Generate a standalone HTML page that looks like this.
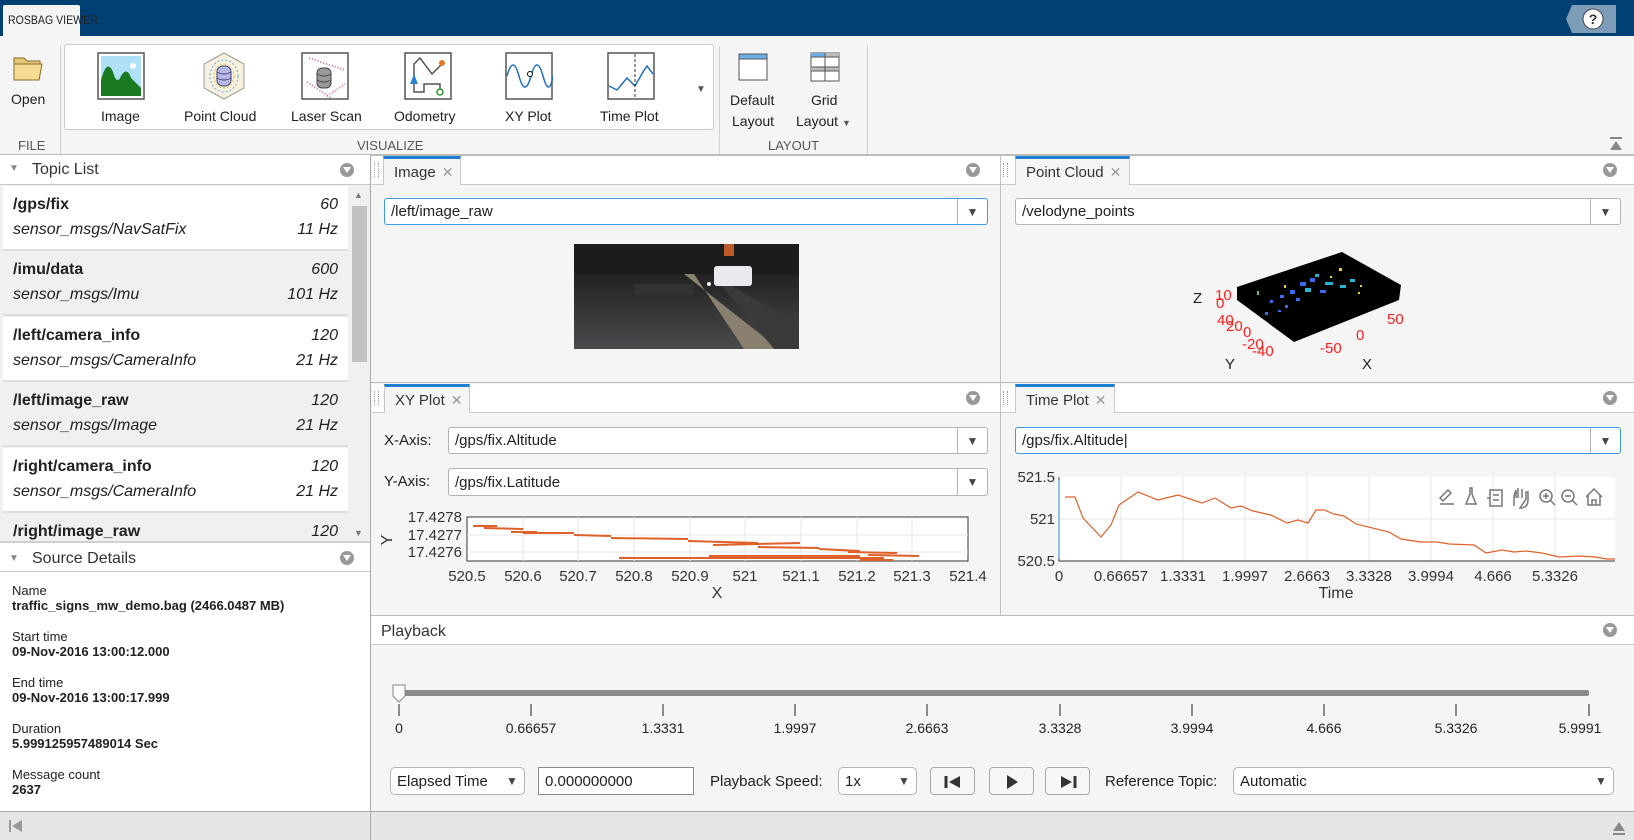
<!DOCTYPE html>
<html><head><meta charset="utf-8">
<style>
*{box-sizing:border-box;margin:0;padding:0}
body{width:1634px;height:840px;position:relative;overflow:hidden;background:#f5f5f5;font-family:"Liberation Sans",sans-serif;color:#212121}
.a{position:absolute}
.t{position:absolute;white-space:nowrap}
.dd{position:absolute;background:#fff;border:1px solid #b4b4b4;border-radius:3px;font-size:15px;padding-left:6px;display:flex;align-items:center}
.dd.f{border-color:#3c9ae8}
.dd .ar{position:absolute;right:0;top:0;bottom:0;width:30px;border-left:1px solid #b4b4b4;display:flex;align-items:center;justify-content:center;font-size:12px;color:#444}
.tabbar{position:absolute;background:#fff;border-bottom:1px solid #c8c8c8}
.tab{position:absolute;height:29px;background:#f5f5f5;border-top:3px solid #1e7fd2;border-right:1px solid #c8c8c8;border-left:1px solid #c8c8c8;font-size:15px;color:#333;padding:5px 0 0 10px}
.tab span{color:#999;font-size:14px;margin-left:6px}
.grip{position:absolute;width:5px;height:14px;border-left:1px dotted #999;border-right:1px dotted #999}
.ci{position:absolute;width:14px;height:14px;border-radius:50%;background:#999}
.ci:after{content:"";position:absolute;left:3px;top:4px;border-left:4px solid transparent;border-right:4px solid transparent;border-top:6px solid #fff}
.item{position:absolute;left:3px;width:345px;height:65px;border-bottom:2px solid #ddd}
.item b{position:absolute;left:10px;top:10px;font-size:16px}
.item i{position:absolute;left:10px;top:35px;font-size:16px}
.item .r1{position:absolute;right:10px;top:10px;font-size:16px;font-style:italic}
.item .r2{position:absolute;right:10px;top:35px;font-size:16px;font-style:italic}
.lbl{font-size:13px;color:#222}
.val{font-size:13px;font-weight:bold}
.btn{position:absolute;border:1px solid #aaa;border-radius:4px;background:#f7f7f7}
</style></head><body>

<div class="a" style="left:0;top:0;width:1634px;height:36px;background:#023f73"></div>
<div class="a" style="left:3px;top:5px;width:77px;height:31px;background:#f5f5f5;border-radius:2px 2px 0 0"></div>
<div class="t" style="left:8px;top:13px;font-size:12px;color:#222;transform:scaleX(0.88);transform-origin:left">ROSBAG VIEWER</div>
<svg class="a" style="left:1566px;top:5px" width="50" height="28"><polygon points="6,0 50,0 50,28 6,28 0,14" fill="#7c9cb8"/><circle cx="27" cy="14" r="10" fill="#fff" stroke="#444" stroke-width="1"/><text x="27" y="19" font-size="14" font-weight="bold" text-anchor="middle" fill="#333" font-family="Liberation Sans">?</text></svg>

<div class="a" style="left:0;top:36px;width:1634px;height:119px;background:#f5f5f5;border-bottom:1px solid #bbb"></div>
<svg class="a" style="left:12px;top:54px" width="34" height="28"><path d="M2,4 h10 l3,3 h13 v4 H2z" fill="#e8c877" stroke="#8a6a2a"/><path d="M2,10 h28 l-3,16 H2z" fill="#f6dc92" stroke="#8a6a2a"/></svg>
<div class="t" style="left:11px;top:91px;font-size:14px">Open</div>
<div class="t" style="left:18px;top:138px;font-size:13px;color:#555">FILE</div>
<div class="a" style="left:60px;top:46px;width:1px;height:108px;background:#d0d0d0"></div>
<div class="a" style="left:64px;top:44px;width:650px;height:86px;background:#fff;border:1px solid #ccc;border-radius:3px"></div>
<svg class="a" style="left:97px;top:52px" width="48" height="48"><rect x="1" y="1" width="46" height="46" fill="#fff" stroke="#555" stroke-width="1.5"/><rect x="4" y="4" width="40" height="40" fill="#aee0f8"/><path d="M4,44 V28 Q10,6 16,20 Q20,34 24,24 Q30,14 34,26 L44,36 V44z" fill="#1a7a1f"/><circle cx="36" cy="14" r="3" fill="#fff"/></svg>
<div class="t" style="left:101px;top:108px;font-size:14px">Image</div>
<svg class="a" style="left:200px;top:52px" width="48" height="48"><polygon points="24,1 44,12 44,36 24,47 4,36 4,12" fill="#f7f2e0" stroke="#999"/><ellipse cx="24" cy="24" rx="14" ry="16" fill="none" stroke="#6ad" stroke-dasharray="2 2"/><ellipse cx="24" cy="24" rx="10" ry="12" fill="none" stroke="#e8c040" stroke-dasharray="2 2"/><rect x="17" y="14" width="14" height="20" rx="6" fill="#b8b8e8" stroke="#447" /><path d="M17,20 Q24,24 31,20 M17,26 Q24,30 31,26" stroke="#447" fill="none"/></svg>
<div class="t" style="left:184px;top:108px;font-size:14px">Point Cloud</div>
<svg class="a" style="left:301px;top:52px" width="48" height="48"><rect x="1" y="1" width="46" height="46" fill="#fff" stroke="#555" stroke-width="1.5"/><path d="M6,30 L30,46 M8,6 L44,18 M26,44 L44,32" stroke="#e06ab0" stroke-width="2" stroke-dasharray="1 2"/><rect x="16" y="16" width="14" height="20" rx="5" fill="#999" stroke="#444"/><path d="M16,22 Q23,26 30,22 M16,28 Q23,32 30,28" stroke="#444" fill="none"/></svg>
<div class="t" style="left:291px;top:108px;font-size:14px">Laser Scan</div>
<svg class="a" style="left:404px;top:52px" width="48" height="48"><rect x="1" y="1" width="46" height="46" fill="#fff" stroke="#555" stroke-width="1.5"/><path d="M10,26 V12 L16,6 L28,22 L38,12 M10,26 V40 H20 V32 H36 V40" stroke="#555" fill="none" stroke-width="1.5"/><polygon points="10,22 6,32 14,32" fill="#2a7fd0"/><circle cx="38" cy="11" r="3" fill="#e8762a"/><circle cx="36" cy="40" r="3" fill="#fff" stroke="#2a9a2a" stroke-width="1.5"/></svg>
<div class="t" style="left:394px;top:108px;font-size:14px">Odometry</div>
<svg class="a" style="left:505px;top:52px" width="48" height="48"><rect x="1" y="1" width="46" height="46" fill="#fff" stroke="#555" stroke-width="1.5"/><path d="M2,24 Q8,2 14,24 T26,24 T38,24 T48,24" stroke="#1f6fc0" fill="none" stroke-width="1.5"/><circle cx="25" cy="22" r="2.5" fill="#fff" stroke="#000"/></svg>
<div class="t" style="left:505px;top:108px;font-size:14px">XY Plot</div>
<svg class="a" style="left:607px;top:52px" width="48" height="48"><rect x="1" y="1" width="46" height="46" fill="#fff" stroke="#555" stroke-width="1.5"/><path d="M2,34 L10,38 L20,26 L28,34 L36,20 L40,14 L46,22" stroke="#1f6fc0" fill="none" stroke-width="1.5"/><path d="M28,2 V46" stroke="#333" stroke-dasharray="3 2"/></svg>
<div class="t" style="left:600px;top:108px;font-size:14px">Time Plot</div>
<div class="t" style="left:696px;top:84px;font-size:10px;color:#555">▼</div>
<div class="t" style="left:357px;top:138px;font-size:13px;color:#555">VISUALIZE</div>
<div class="a" style="left:719px;top:46px;width:1px;height:108px;background:#d0d0d0"></div>
<svg class="a" style="left:738px;top:53px" width="30" height="28"><rect x="1" y="1" width="28" height="26" fill="#fff" stroke="#555"/><rect x="1" y="1" width="28" height="5" fill="#6aaee8" stroke="#555"/></svg>
<svg class="a" style="left:810px;top:52px" width="30" height="30"><rect x="1" y="1" width="28" height="28" fill="#fff" stroke="#555"/><rect x="1" y="1" width="14" height="4" fill="#6aaee8"/><rect x="15" y="1" width="14" height="4" fill="#bbb"/><rect x="1" y="15" width="28" height="4" fill="#bbb"/><path d="M15,1V29M1,5H29M1,15H29M1,19H29" stroke="#555"/></svg>
<div class="t" style="left:730px;top:92px;font-size:14px">Default</div>
<div class="t" style="left:732px;top:113px;font-size:14px">Layout</div>
<div class="t" style="left:811px;top:92px;font-size:14px">Grid</div>
<div class="t" style="left:796px;top:113px;font-size:14px">Layout <span style="font-size:9px;color:#555">▼</span></div>
<div class="t" style="left:768px;top:138px;font-size:13px;color:#555">LAYOUT</div>
<div class="a" style="left:867px;top:46px;width:1px;height:108px;background:#d0d0d0"></div>
<svg class="a" style="left:1609px;top:137px" width="14" height="14"><path d="M1,1H13" stroke="#888" stroke-width="2"/><polygon points="7,4 1,13 13,13" fill="#888"/></svg>

<div class="a" style="left:0;top:155px;width:371px;height:685px;background:#fff;border-right:1px solid #aaa"></div>
<div class="a" style="left:0;top:184px;width:370px;height:1px;background:#c8c8c8"></div>
<div class="t" style="left:9px;top:163px;font-size:10px;color:#888">▼</div>
<div class="t" style="left:32px;top:161px;font-size:16px;color:#333">Topic List</div>
<div class="ci" style="left:340px;top:163px"></div>
<div class="a" style="left:0;top:185px;width:370px;height:356px;background:#f0f0f0"></div>
<div class="item" style="top:186px;background:#fff"><b>/gps/fix</b><i>sensor_msgs/NavSatFix</i><span class="r1">60</span><span class="r2">11 Hz</span></div>
<div class="item" style="top:251px;background:#f0f0f0"><b>/imu/data</b><i>sensor_msgs/Imu</i><span class="r1">600</span><span class="r2">101 Hz</span></div>
<div class="item" style="top:317px;background:#fff"><b>/left/camera_info</b><i>sensor_msgs/CameraInfo</i><span class="r1">120</span><span class="r2">21 Hz</span></div>
<div class="item" style="top:382px;background:#f0f0f0"><b>/left/image_raw</b><i>sensor_msgs/Image</i><span class="r1">120</span><span class="r2">21 Hz</span></div>
<div class="item" style="top:448px;background:#fff"><b>/right/camera_info</b><i>sensor_msgs/CameraInfo</i><span class="r1">120</span><span class="r2">21 Hz</span></div>
<div class="item" style="top:513px;height:28px;background:#f0f0f0;overflow:hidden;border:none"><b>/right/image_raw</b><span class="r1">120</span></div>
<div class="a" style="left:351px;top:186px;width:17px;height:355px;background:#f0f0f0"></div>
<div class="a" style="left:352px;top:206px;width:15px;height:156px;background:#c2c2c2"></div>
<div class="t" style="left:354px;top:190px;font-size:9px;color:#777">▲</div>
<div class="t" style="left:354px;top:528px;font-size:9px;color:#777">▼</div>
<div class="a" style="left:0;top:541px;width:370px;height:2px;background:#d0d0d0"></div>
<div class="a" style="left:0;top:571px;width:370px;height:1px;background:#c8c8c8"></div>
<div class="t" style="left:9px;top:553px;font-size:10px;color:#888">▼</div>
<div class="t" style="left:32px;top:550px;font-size:16px;color:#333">Source Details</div>
<div class="ci" style="left:340px;top:551px"></div>
<div class="t lbl" style="left:12px;top:583px">Name</div>
<div class="t val" style="left:12px;top:598px">traffic_signs_mw_demo.bag (2466.0487 MB)</div>
<div class="t lbl" style="left:12px;top:629px">Start time</div>
<div class="t val" style="left:12px;top:644px">09-Nov-2016 13:00:12.000</div>
<div class="t lbl" style="left:12px;top:675px">End time</div>
<div class="t val" style="left:12px;top:690px">09-Nov-2016 13:00:17.999</div>
<div class="t lbl" style="left:12px;top:721px">Duration</div>
<div class="t val" style="left:12px;top:736px">5.999125957489014 Sec</div>
<div class="t lbl" style="left:12px;top:767px">Message count</div>
<div class="t val" style="left:12px;top:782px">2637</div>
<div class="a" style="left:0;top:811px;width:1634px;height:29px;background:#e6e6e6;border-top:1px solid #aaa"></div>
<div class="a" style="left:370px;top:811px;width:1px;height:29px;background:#aaa"></div>
<svg class="a" style="left:8px;top:818px" width="16" height="16"><path d="M2,2V14" stroke="#999" stroke-width="2"/><polygon points="14,2 4,8 14,14" fill="#999"/></svg>
<svg class="a" style="left:1612px;top:820px" width="14" height="16"><polygon points="7,2 1,11 13,11" fill="#888"/><path d="M1,14H13" stroke="#888" stroke-width="2"/></svg>

<div class="a" style="left:371px;top:155px;width:1263px;height:1px;background:#bbb"></div>
<div class="tabbar" style="left:372px;top:156px;width:628px;height:29px"></div>
<div class="grip" style="left:374px;top:163px"></div>
<div class="tab" style="left:383px;top:156px;width:78px">Image<span>✕</span></div>
<div class="ci" style="left:966px;top:163px"></div>
<div class="dd f" style="left:384px;top:198px;width:604px;height:27px">/left/image_raw<div class="ar">▼</div></div>
<svg class="a" style="left:574px;top:244px" width="225" height="105">
<defs><linearGradient id="rd" x1="0" y1="0" x2="0" y2="1"><stop offset="0" stop-color="#222"/><stop offset="1" stop-color="#4a4a4e"/></linearGradient></defs>
<rect width="225" height="105" fill="#1a1d1a"/>
<rect y="30" width="225" height="75" fill="url(#rd)"/>
<polygon points="110,30 120,30 170,105 205,105" fill="#8a8070"/>
<polygon points="140,32 225,80 225,105 200,105" fill="#3a3a3a"/>
<rect x="140" y="22" width="38" height="20" rx="3" fill="#e8eaf0"/>
<rect x="150" y="0" width="10" height="12" fill="#c05a2a"/>
<rect x="60" y="40" width="60" height="10" fill="#333"/>
<circle cx="135" cy="40" r="2" fill="#eee"/>
</svg>
<div class="a" style="left:1000px;top:156px;width:1px;height:460px;background:#c0c0c0"></div>

<div class="tabbar" style="left:1001px;top:156px;width:633px;height:29px"></div>
<div class="grip" style="left:1003px;top:163px"></div>
<div class="tab" style="left:1015px;top:156px;width:115px">Point Cloud<span>✕</span></div>
<div class="ci" style="left:1603px;top:163px"></div>
<div class="dd" style="left:1015px;top:198px;width:606px;height:27px">/velodyne_points<div class="ar">▼</div></div>

<div class="a" style="left:371px;top:382px;width:1263px;height:1px;background:#bbb"></div>
<div class="tabbar" style="left:372px;top:384px;width:628px;height:29px"></div>
<div class="grip" style="left:374px;top:391px"></div>
<div class="tab" style="left:384px;top:384px;width:86px">XY Plot<span>✕</span></div>
<div class="ci" style="left:966px;top:391px"></div>
<div class="t" style="left:384px;top:432px;font-size:15px">X-Axis:</div>
<div class="dd" style="left:448px;top:427px;width:540px;height:27px">/gps/fix.Altitude<div class="ar">▼</div></div>
<div class="t" style="left:384px;top:473px;font-size:15px">Y-Axis:</div>
<div class="dd" style="left:448px;top:468px;width:540px;height:28px">/gps/fix.Latitude<div class="ar">▼</div></div>

<div class="tabbar" style="left:1001px;top:384px;width:633px;height:29px"></div>
<div class="grip" style="left:1003px;top:391px"></div>
<div class="tab" style="left:1015px;top:384px;width:100px">Time Plot<span>✕</span></div>
<div class="ci" style="left:1603px;top:391px"></div>
<div class="dd f" style="left:1015px;top:427px;width:606px;height:27px">/gps/fix.Altitude|<div class="ar">▼</div></div>

<div class="a" style="left:371px;top:615px;width:1263px;height:1px;background:#bbb"></div>
<div class="a" style="left:371px;top:616px;width:1263px;height:29px;background:#fff;border-bottom:1px solid #c8c8c8"></div>
<div class="t" style="left:381px;top:623px;font-size:16px;color:#333">Playback</div>
<div class="ci" style="left:1603px;top:623px"></div>
<div class="a" style="left:399px;top:690px;width:1190px;height:6px;background:#8a8a8a;border-radius:2px"></div>
<svg class="a" style="left:391px;top:684px" width="16" height="20"><path d="M2,1H14V12L8,18L2,12Z" fill="#fafafa" stroke="#888"/></svg>

<div class="dd" style="left:390px;top:767px;width:135px;height:28px;border-radius:5px">Elapsed Time<div class="ar" style="border:none;width:24px">▼</div></div>
<div class="dd" style="left:538px;top:767px;width:156px;height:28px;border-radius:0;border-color:#888">0.000000000</div>
<div class="t" style="left:710px;top:773px;font-size:15px">Playback Speed:</div>
<div class="dd" style="left:838px;top:767px;width:79px;height:28px;border-radius:5px">1x<div class="ar" style="border:none;width:24px">▼</div></div>
<div class="btn" style="left:930px;top:767px;width:45px;height:28px"><svg width="45" height="28"><path d="M15,8V20" stroke="#333" stroke-width="3"/><polygon points="29,8 18,14 29,20" fill="#333"/></svg></div>
<div class="btn" style="left:989px;top:767px;width:45px;height:28px"><svg width="45" height="28"><polygon points="17,7 28,14 17,21" fill="#333"/></svg></div>
<div class="btn" style="left:1045px;top:767px;width:45px;height:28px"><svg width="45" height="28"><polygon points="15,8 26,14 15,20" fill="#333"/><path d="M29,8V20" stroke="#333" stroke-width="3"/></svg></div>
<div class="t" style="left:1105px;top:773px;font-size:15px">Reference Topic:</div>
<div class="dd" style="left:1233px;top:767px;width:381px;height:28px;border-radius:5px">Automatic<div class="ar" style="border:none;width:24px">▼</div></div>

<svg class="a" style="left:0;top:0" width="1634" height="840" font-family="Liberation Sans">
<polygon points="1237,287 1342,252 1401,285 1399,300 1294,342 1237,300" fill="#000"/>
<g fill="#3a6af0">
<rect x="1270" y="300" width="3" height="3"/><rect x="1280" y="295" width="4" height="3"/><rect x="1290" y="290" width="5" height="4"/><rect x="1300" y="282" width="6" height="4"/><rect x="1310" y="278" width="5" height="4"/><rect x="1285" y="305" width="3" height="3"/><rect x="1265" y="312" width="3" height="3"/><rect x="1320" y="290" width="6" height="3"/><rect x="1296" y="298" width="4" height="3"/><rect x="1278" y="310" width="3" height="2"/>
</g>
<g fill="#28b4d4"><rect x="1305" y="288" width="6" height="4"/><rect x="1325" y="282" width="8" height="3"/><rect x="1340" y="285" width="6" height="3"/><rect x="1315" y="274" width="4" height="3"/><rect x="1350" y="279" width="5" height="3"/></g>
<g fill="#f0d030"><rect x="1339" y="268" width="3" height="3"/><rect x="1360" y="285" width="2" height="2"/><rect x="1284" y="285" width="2" height="3"/><rect x="1330" y="276" width="2" height="2"/><rect x="1358" y="292" width="2" height="2"/></g>
<rect x="1257" y="291" width="2" height="4" fill="#6ac060"/>
<g fill="#ff2020" font-size="15"><text x="1215" y="300">10</text><text x="1216" y="308">0</text><text x="1217" y="325">40</text><text x="1226" y="331">20</text><text x="1243" y="337">0</text><text x="1242" y="349">-20</text><text x="1252" y="356">-40</text><text x="1387" y="324">50</text><text x="1356" y="340">0</text><text x="1320" y="353">-50</text></g>
<g fill="#222" font-size="15"><text x="1193" y="303">Z</text><text x="1225" y="369">Y</text><text x="1362" y="369">X</text></g>

<rect x="467" y="517" width="501" height="44" fill="#fff" stroke="#333"/>
<g stroke="#e4e4e4"><path d="M523,517V561M578,517V561M634,517V561M690,517V561M745,517V561M801,517V561M857,517V561M912,517V561M467,535H968M467,552H968"/></g>
<g stroke="#e0602a" stroke-width="2" fill="none">
<path d="M473,526H497M484,528L523,529M511,532H537M523,533H574M574,535L611,536M611,538L688,539M688,541L758,543M713,545L800,543M758,547L819,548M819,549L860,551M848,552L897,553M868,555L919,556M619,558H884M709,556H860M860,560H893"/>
</g>
<g fill="#333" font-size="15" text-anchor="end"><text x="462" y="522">17.4278</text><text x="462" y="540">17.4277</text><text x="462" y="557">17.4276</text></g>
<g fill="#333" font-size="15" text-anchor="middle"><text x="467" y="581">520.5</text><text x="523" y="581">520.6</text><text x="578" y="581">520.7</text><text x="634" y="581">520.8</text><text x="690" y="581">520.9</text><text x="745" y="581">521</text><text x="801" y="581">521.1</text><text x="857" y="581">521.2</text><text x="912" y="581">521.3</text><text x="968" y="581">521.4</text><text x="717" y="598" font-size="16">X</text></g>
<text x="392" y="540" font-size="16" fill="#333" transform="rotate(-90 392 540)" text-anchor="middle">Y</text>

<rect x="1059" y="477" width="556" height="84" fill="#fff"/>
<g stroke="#e4e4e4"><path d="M1121,477V561M1183,477V561M1245,477V561M1307,477V561M1369,477V561M1431,477V561M1493,477V561M1555,477V561M1059,519H1615"/></g>
<path d="M1059,477V561H1615" stroke="#333" fill="none"/>
<path d="M1059,480V558" stroke="#6aaee8" stroke-width="1.5"/>
<path d="M1065,497L1075,497L1083,518L1101,537L1111,525L1119,505L1138,492L1158,500L1178,495L1202,503L1215,498L1231,508L1241,506L1253,511L1271,515L1287,523L1298,520L1308,523L1316,510L1324,510L1334,514L1344,516L1356,524L1389,532L1401,539L1421,542L1437,542L1449,544L1474,545L1486,553L1502,550L1514,552L1526,551L1542,553L1559,557L1579,556L1595,557L1607,559L1615,559" stroke="#e0602a" fill="none" stroke-width="1.2"/>
<g fill="#333" font-size="15" text-anchor="end"><text x="1055" y="482">521.5</text><text x="1055" y="524">521</text><text x="1055" y="566">520.5</text></g>
<g fill="#333" font-size="15" text-anchor="middle"><text x="1059" y="581">0</text><text x="1121" y="581">0.66657</text><text x="1183" y="581">1.3331</text><text x="1245" y="581">1.9997</text><text x="1307" y="581">2.6663</text><text x="1369" y="581">3.3328</text><text x="1431" y="581">3.9994</text><text x="1493" y="581">4.666</text><text x="1555" y="581">5.3326</text><text x="1336" y="598" font-size="16">Time</text></g>
<g stroke="#777" fill="none" stroke-width="1.5">
<path d="M1440,498l8,-8l3,3l-8,8z M1440,504h14"/>
<path d="M1470,488v6l-4,10h10l-4,-10v-6z"/>
<path d="M1490,490h12v16h-12z M1493,495h6M1493,500h6 M1490,498l-3,0"/>
<path d="M1514,506v-10l2,-6v8M1518,498v-10M1522,498v-9M1526,499v-7l2,0v8q0,8-8,8z"/>
<circle cx="1546" cy="496" r="6"/><path d="M1550,500l5,5M1543,496h6M1546,493v6"/>
<circle cx="1568" cy="496" r="6"/><path d="M1572,500l5,5M1565,496h6"/>
<path d="M1586,497l8,-8l8,8M1588,495v10h12v-10M1592,505v-5h4v5"/>
</g>

<g stroke="#222"><path d="M399,704V716M531,704V716M663,704V716M795,704V716M927,704V716M1060,704V716M1192,704V716M1324,704V716M1456,704V716M1589,704V716"/></g>
<g fill="#222" font-size="14" text-anchor="middle"><text x="399" y="733">0</text><text x="531" y="733">0.66657</text><text x="663" y="733">1.3331</text><text x="795" y="733">1.9997</text><text x="927" y="733">2.6663</text><text x="1060" y="733">3.3328</text><text x="1192" y="733">3.9994</text><text x="1324" y="733">4.666</text><text x="1456" y="733">5.3326</text><text x="1580" y="733">5.9991</text></g>
</svg>
</body></html>
